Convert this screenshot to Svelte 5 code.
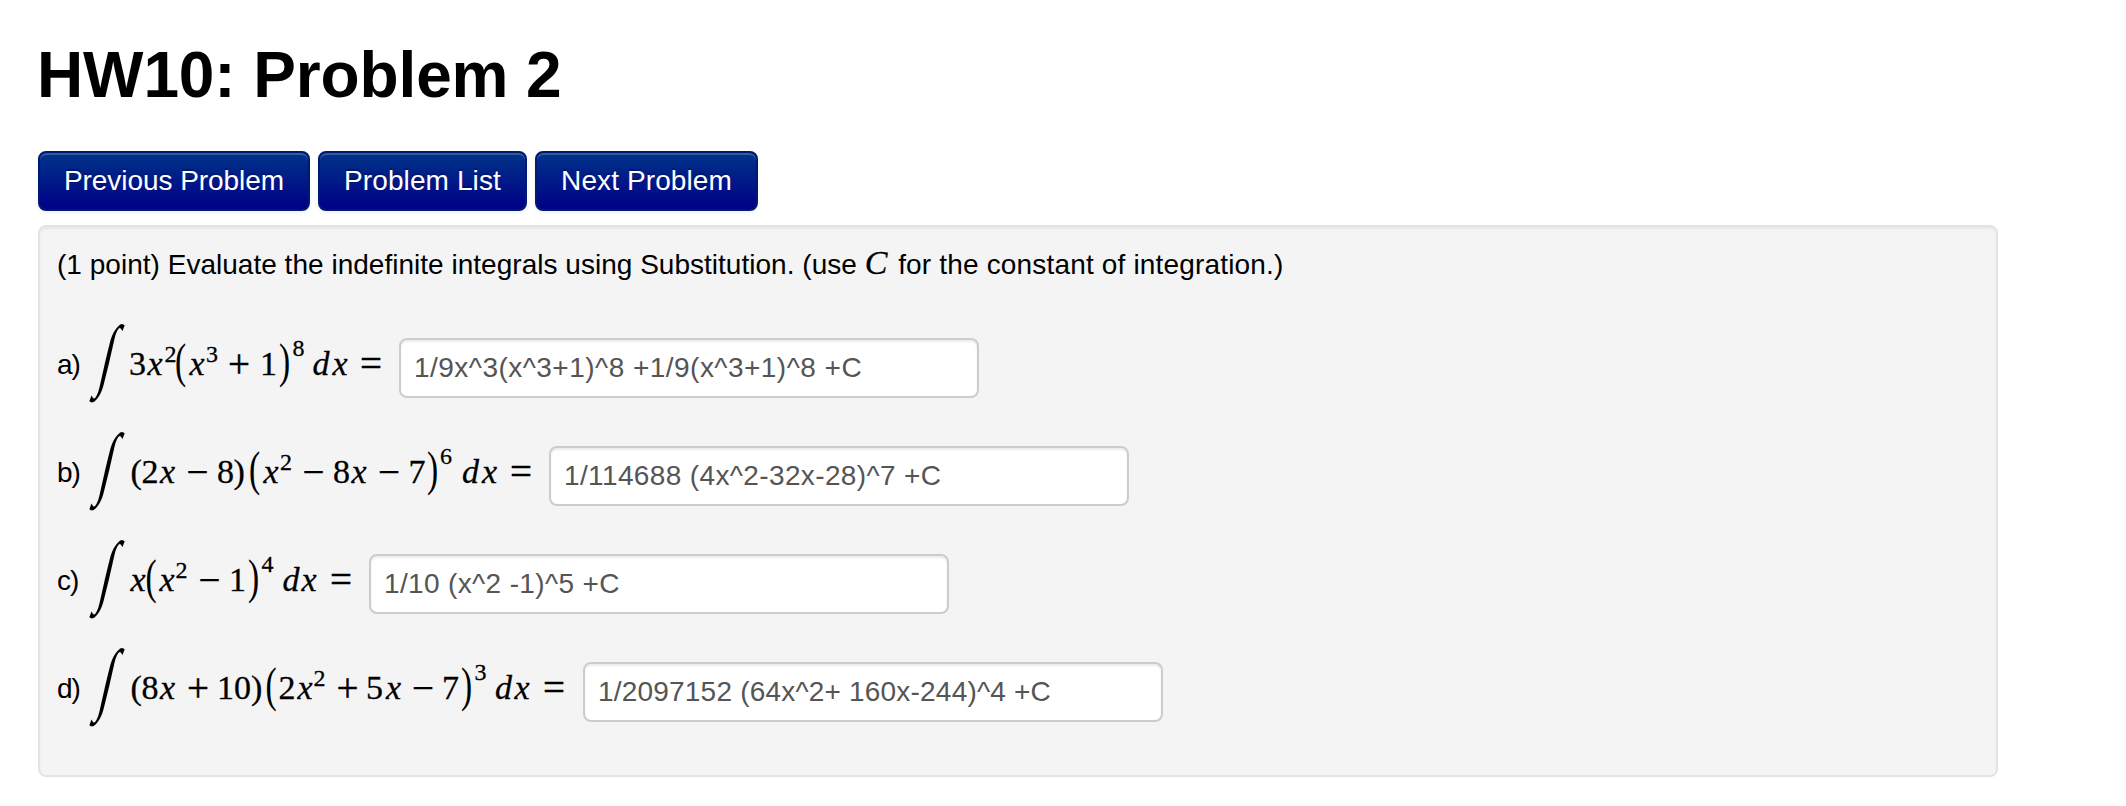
<script>
  // Formula tokens: [kind, text, x]; kinds: n = upright, i = italic, o = operator,
  // s = inner exponent, e = outer exponent, b = tall delimiter
  const problems = [
    {
      label: 'a)', end: 399, tracking: 0.47, answer: '1/9x^3(x^3+1)^8 +1/9(x^3+1)^8 +C',
      tokens: [['n','3',129],['i','x',147.5],['s','2',164.5],['b','(',175],['i','x',189.5],['s','3',206],['o','+',228],['n','1',260],['b',')',279],['e','8',292.5],['i','d',312.5],['i','x',332.5],['o','=',360]]
    },
    {
      label: 'b)', end: 549, tracking: 0.37, answer: '1/114688 (4x^2-32x-28)^7 +C',
      tokens: [['n','(',130.5],['n','2',141.5],['i','x',160],['o','−',186.5],['n','8',217],['n',')',233.5],['b','(',249],['i','x',263.5],['s','2',280],['o','−',302.5],['n','8',333],['i','x',351.5],['o','−',378],['n','7',408.5],['b',')',427],['e','6',440],['i','d',462],['i','x',482],['o','=',510]]
    },
    {
      label: 'c)', end: 369, tracking: 0.36, answer: '1/10 (x^2 -1)^5 +C',
      tokens: [['i','x',130.5],['b','(',145.5],['i','x',159.5],['s','2',175.5],['o','−',198.5],['n','1',229],['b',')',248],['e','4',261.5],['i','d',282.5],['i','x',301.5],['o','=',330]]
    },
    {
      label: 'd)', end: 583, tracking: 0.2, answer: '1/2097152 (64x^2+ 160x-244)^4 +C',
      tokens: [['n','(',130.5],['n','8',141.5],['i','x',160],['o','+',187],['n','10',217],['n',')',251],['b','(',265.5],['n','2',278.5],['i','x',297.5],['s','2',313.5],['o','+',336.5],['n','5',366],['i','x',386],['o','−',412],['n','7',442],['b',')',461],['e','3',474.5],['i','d',495],['i','x',514.5],['o','=',543]]
    }
  ];
  const baselines = { n: 61, i: 61, o: 62.5, s: 48, e: 42 };
</script>

<main>
  <h1>HW10: Problem 2</h1>
  <nav>
    <button class="prev">Previous Problem</button>
    <button class="list">Problem List</button>
    <button class="next">Next Problem</button>
  </nav>
  <section>
    <p>(1 point) Evaluate the indefinite integrals using Substitution. (use <span class="const">C</span> <span class="tail">for the constant of integration.)</span></p>
    {#each problems as p}
      <div class="row">
        <span class="label">{p.label}</span>
        <svg width={p.end - 84} height="108" viewBox="84 0 {p.end - 84} 108">
          <text class="int" transform="translate(96.5 67) skewX(-13) scale(.62 1.05)">∫</text>
          {#each p.tokens as [kind, text, x]}
            {#if kind === 'b'}
              <text class="b" transform="translate({x} 62.5) scale(.7 1)">{text}</text>
            {:else}
              <text class={kind} {x} y={baselines[kind]}>{text}</text>
            {/if}
          {/each}
        </svg>
        <input type="text" value={p.answer} style="letter-spacing: {p.tracking}px" />
      </div>
    {/each}
  </section>
</main>

<style>
  :global(body) { background: #fff; }
  main {
    box-sizing: border-box;
    height: 806px;
    padding: 38px 128px 0 38px;
    font-family: "Liberation Sans", Arial, sans-serif;
    color: #000;
  }
  h1 { margin: 0 0 0 -1px; height: 113px; font-size: 64px; line-height: 74px; font-weight: bold; letter-spacing: -.12px; }
  nav { display: flex; gap: 8px; }
  button {
    box-sizing: border-box;
    height: 60px;
    padding: 0;
    border: 2px solid #001a73;
    border-radius: 8px;
    font: 28px/56px "Liberation Sans", Arial, sans-serif;
    color: #fff;
    white-space: nowrap;
    background: linear-gradient(#003388, #000088);
    text-shadow: 0 -2px 0 rgba(0, 0, 0, .25);
    box-shadow: inset 0 2px 0 rgba(255, 255, 255, .2), 0 2px 4px rgba(0, 0, 0, .05);
  }
  .prev { width: 272px; letter-spacing: -.05px; }
  .list { width: 209px; letter-spacing: .1px; }
  .next { width: 223px; letter-spacing: .1px; }
  section {
    box-sizing: border-box;
    height: 552px;
    margin-top: 14px;
    padding: 17px;
    border: 2px solid #e3e3e3;
    border-radius: 8px;
    background: #f4f4f4;
    box-shadow: inset 0 2px 2px rgba(0, 0, 0, .05);
  }
  p { margin: 0; height: 70px; font-size: 28px; line-height: 42px; letter-spacing: .02px; white-space: nowrap; }
  .const { font: italic 34px/1 "Liberation Serif", serif; padding-right: 3px; -webkit-text-stroke: .3px #000; }
  .tail { letter-spacing: .17px; }
  .row { display: flex; align-items: flex-start; height: 108px; }
  .label { flex: none; width: 27px; padding-top: 35px; font-size: 28px; line-height: 32px; letter-spacing: -1px; white-space: nowrap; }
  svg { flex: none; overflow: visible; font-family: "Liberation Serif", serif; }
  .n, .i { font-size: 34px; }
  .n, .i, .s, .e { stroke: #000; stroke-width: .3px; }
  .i { font-style: italic; }
  .o { font-size: 39px; stroke: #000; stroke-width: .4px; }
  .s, .e { font-size: 24px; }
  .b { font-size: 48px; }
  .int { font-size: 76px; }
  input {
    box-sizing: border-box;
    width: 580px;
    height: 60px;
    margin: 24px 0 0;
    padding: 0 13px;
    border: 2px solid #ccc;
    border-radius: 8px;
    background: #fff;
    color: #555;
    font: 28px "Liberation Sans", Arial, sans-serif;
    box-shadow: inset 0 2px 2px rgba(0, 0, 0, .075);
  }
</style>
